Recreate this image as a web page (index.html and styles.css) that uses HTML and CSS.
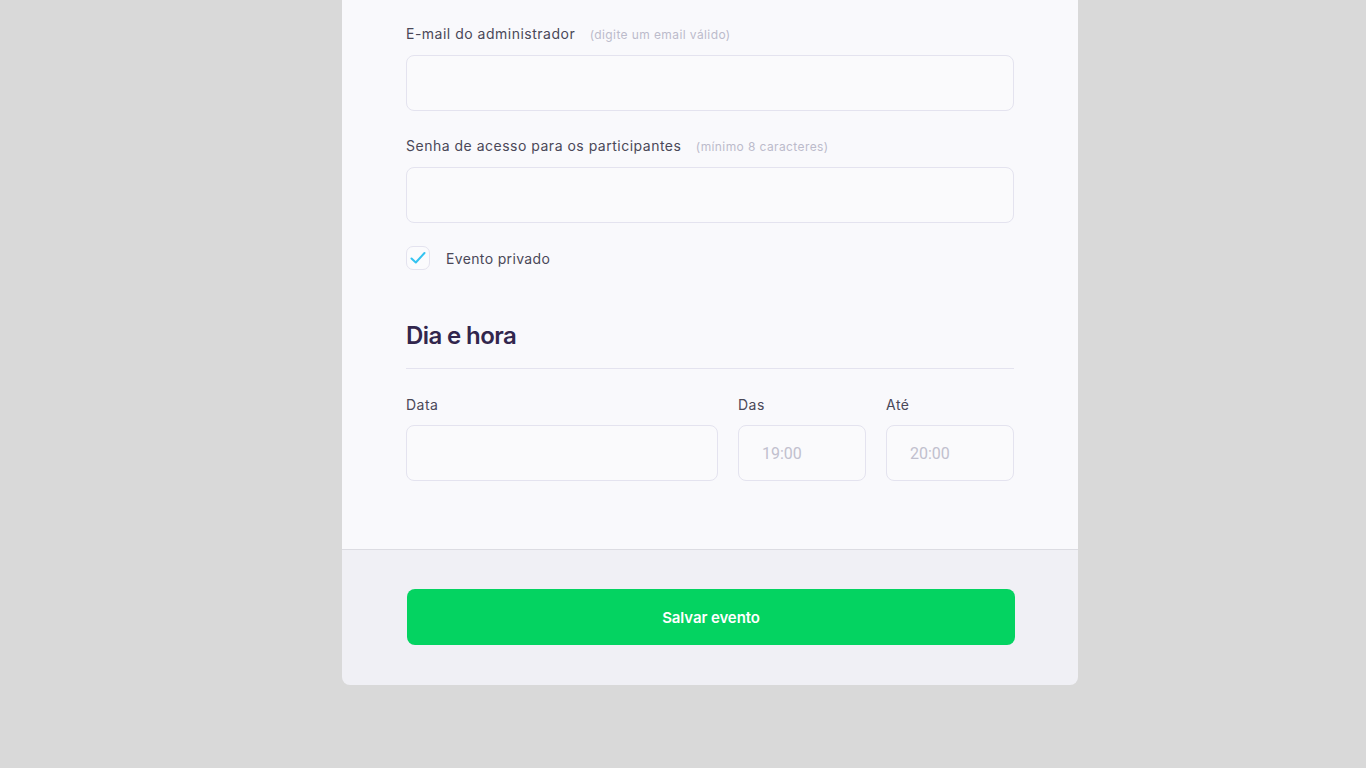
FILE: index.html
```html
<!DOCTYPE html>
<html lang="pt-BR">
<head>
<meta charset="utf-8">
<title>Evento</title>
<link rel="stylesheet" href="styles.css">
</head>
<body>
<main class="card">
  <section class="card-body">
    <div class="field">
      <label class="label">E-mail do administrador <span class="hint">(digite um email válido)</span></label>
      <div class="input"></div>
    </div>
    <div class="field field-next">
      <label class="label">Senha de acesso para os participantes <span class="hint">(mínimo 8 caracteres)</span></label>
      <div class="input"></div>
    </div>
    <div class="check-row">
      <span class="checkbox">
        <svg width="18" height="18" viewBox="0 0 18 18" fill="none"><path d="M2.5 9.5 L6.8 13.5 L15.5 4" stroke="#33c3f0" stroke-width="2" stroke-linecap="round" stroke-linejoin="round"/></svg>
      </span>
      <span class="check-label">Evento privado</span>
    </div>
    <h2 class="section-title">Dia e hora</h2>
    <div class="row">
      <div class="col col-date">
        <label class="label">Data</label>
        <div class="input"></div>
      </div>
      <div class="col col-time">
        <label class="label">Das</label>
        <div class="input"><span class="placeholder">19:00</span></div>
      </div>
      <div class="col col-time">
        <label class="label">Até</label>
        <div class="input"><span class="placeholder">20:00</span></div>
      </div>
    </div>
  </section>
  <footer class="card-footer">
    <button class="btn">Salvar evento</button>
  </footer>
</main>
</body>
</html>
```

FILE: styles.css
```css
* { box-sizing: border-box; }
html, body { margin: 0; padding: 0; }
body {
  background: #d9d9d9;
  font-family: "Inter", "Noto Sans", sans-serif;
  height: 768px;
  padding-left: 342px;
}
.card {
  width: 736px;
  border-radius: 0 0 8px 8px;
  overflow: hidden;
}
.card-body {
  background: #f9f9fc;
  padding: 23px 64px 68px;
  border-bottom: 1px solid #dcdce2;
}
.field { display: flex; flex-direction: column; }
.field-next { margin-top: 24px; }
.label {
  font-size: 14px;
  line-height: 22px;
  color: #4a4858;
  letter-spacing: 0.5px;
  margin-bottom: 9px;
  display: block;
}
.hint {
  font-size: 12px;
  color: #bcbbcb;
  margin-left: 10px;
  letter-spacing: 0.4px;
}
.input {
  height: 56px;
  border: 1px solid #e4e3ef;
  border-radius: 8px;
  background: #fafafc;
  display: flex;
  align-items: center;
  padding: 0 23px;
}
.placeholder {
  font-family: "Roboto", sans-serif;
  font-size: 16px;
  color: #c1c0ce;
}
.check-row {
  display: flex;
  align-items: center;
  gap: 16px;
  margin-top: 23px;
}
.checkbox {
  width: 24px;
  height: 24px;
  border: 1px solid #e4e3ef;
  border-radius: 7px;
  background: #fbfbfd;
  display: flex;
  align-items: center;
  justify-content: center;
}
.check-label {
  font-size: 14px;
  color: #4a4858;
  letter-spacing: 0.35px;
}
.section-title {
  margin: 51px 0 0;
  font-size: 24px;
  font-weight: 600;
  letter-spacing: -0.6px;
  line-height: 30px;
  color: #32264d;
  padding-bottom: 17px;
  border-bottom: 1px solid #e4e3ef;
}
.row {
  display: flex;
  gap: 20px;
  margin-top: 25px;
}
.col { display: flex; flex-direction: column; }
.col-date { width: 312px; }
.col-time { width: 128px; }
.card-footer {
  background: #f0f0f5;
  padding: 39px 63px 40px 65px;
}
.btn {
  width: 100%;
  height: 56px;
  border: 0;
  border-radius: 8px;
  background: #04d361;
  color: #fff;
  font-family: "Inter", sans-serif;
  font-size: 15px;
  font-weight: 600;
  letter-spacing: -0.1px;
}
```
